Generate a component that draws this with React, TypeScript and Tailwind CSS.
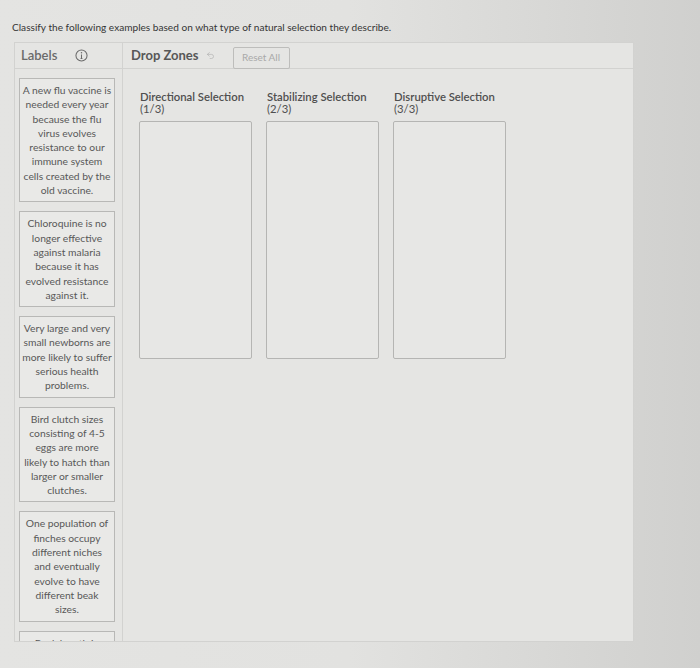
import { Undo2 } from 'lucide-react'

// each label is split into the lines it shows in its card
const LABELS: string[][] = [
  ['A new flu vaccine is', 'needed every year', 'because the flu', 'virus evolves', 'resistance to our', 'immune system', 'cells created by the', 'old vaccine.'],
  ['Chloroquine is no', 'longer effective', 'against malaria', 'because it has', 'evolved resistance', 'against it.'],
  ['Very large and very', 'small newborns are', 'more likely to suffer', 'serious health', 'problems.'],
  ['Bird clutch sizes', 'consisting of 4-5', 'eggs are more', 'likely to hatch than', 'larger or smaller', 'clutches.'],
  ['One population of', 'finches occupy', 'different niches', 'and eventually', 'evolve to have', 'different beak', 'sizes.'],
  ['Beak length in', 'seed-eating birds'],
]

const ZONES = [
  { title: 'Directional Selection', count: '(1/3)' },
  { title: 'Stabilizing Selection', count: '(2/3)' },
  { title: 'Disruptive Selection', count: '(3/3)' },
]

function InfoIcon() {
  return (
    <svg width="13" height="13" viewBox="0 0 14 14" className="text-[#6a6a6a]">
      <circle cx="7" cy="7" r="6" fill="none" stroke="currentColor" strokeWidth="1.1" />
      <path d="M7 6v4.2M6 10.2h2" stroke="currentColor" strokeWidth="1.1" fill="none" />
      <circle cx="7" cy="4" r="0.8" fill="currentColor" />
    </svg>
  )
}

export default function App() {
  return (
    <div className="w-[700px] h-[668px] overflow-hidden bg-gradient-to-r from-[#e4e4e2] via-[#e2e2e0] to-[#d0d0ce] font-['Lato',sans-serif] pt-[20px]">
      <p className="ml-[12px] text-[10.1px] leading-[15px] text-[#353535]">
        Classify the following examples based on what type of natural selection they describe.
      </p>

      <div className="ml-[14px] mt-[7px] w-[620px] h-[600px] border border-[#d2d2d0] bg-[#e5e5e3] flex flex-col overflow-hidden">
        <div className="flex h-[26px] shrink-0 border-b border-[#d2d2d0]">
          <div className="w-[108px] shrink-0 border-r border-[#d2d2d0] flex items-center gap-[18px] pl-[6px]">
            <span className="text-[13px] font-semibold text-[#6a6a6a]">Labels</span>
            <InfoIcon />
          </div>
          <div className="flex items-center pl-[8px]">
            <span className="text-[13px] font-bold text-[#575757]">Drop Zones</span>
            <Undo2 size={9} strokeWidth={1.5} className="ml-[7px] text-[#a8a8a8]" />
            <button className="ml-[18px] mt-[4px] h-[22px] w-[57px] border border-[#bdbdbb] rounded-[2px] text-[10px] text-[#a9a9a9]">
              Reset All
            </button>
          </div>
        </div>

        <div className="flex flex-1 min-h-0">
          <div className="w-[108px] shrink-0 border-r border-[#d2d2d0] pl-[4px] pt-[9px] flex flex-col gap-[9px]">
            {LABELS.map(lines => (
              <div
                key={lines[0]}
                className="w-[96px] shrink-0 border border-[#b8b8b6] bg-[#e9e9e7] px-[1px] py-[4px] text-center text-[10.3px] leading-[14.3px] text-[#585858] whitespace-nowrap"
              >
                {lines.map(l => (
                  <div key={l}>{l}</div>
                ))}
              </div>
            ))}
          </div>

          <div className="flex gap-[14px] pl-[16px] pt-[22px]">
            {ZONES.map(z => (
              <div key={z.title} className="w-[113px] flex flex-col">
                <div className="text-[11.3px] leading-[12px] text-[#4f4f4f] pl-[1px]">
                  <div className="font-semibold">{z.title}</div>
                  <div>{z.count}</div>
                </div>
                <div className="mt-[6px] h-[238px] border border-[#b5b5b3] rounded-[2px] bg-[#e7e7e5]" />
              </div>
            ))}
          </div>
        </div>
      </div>
    </div>
  )
}
